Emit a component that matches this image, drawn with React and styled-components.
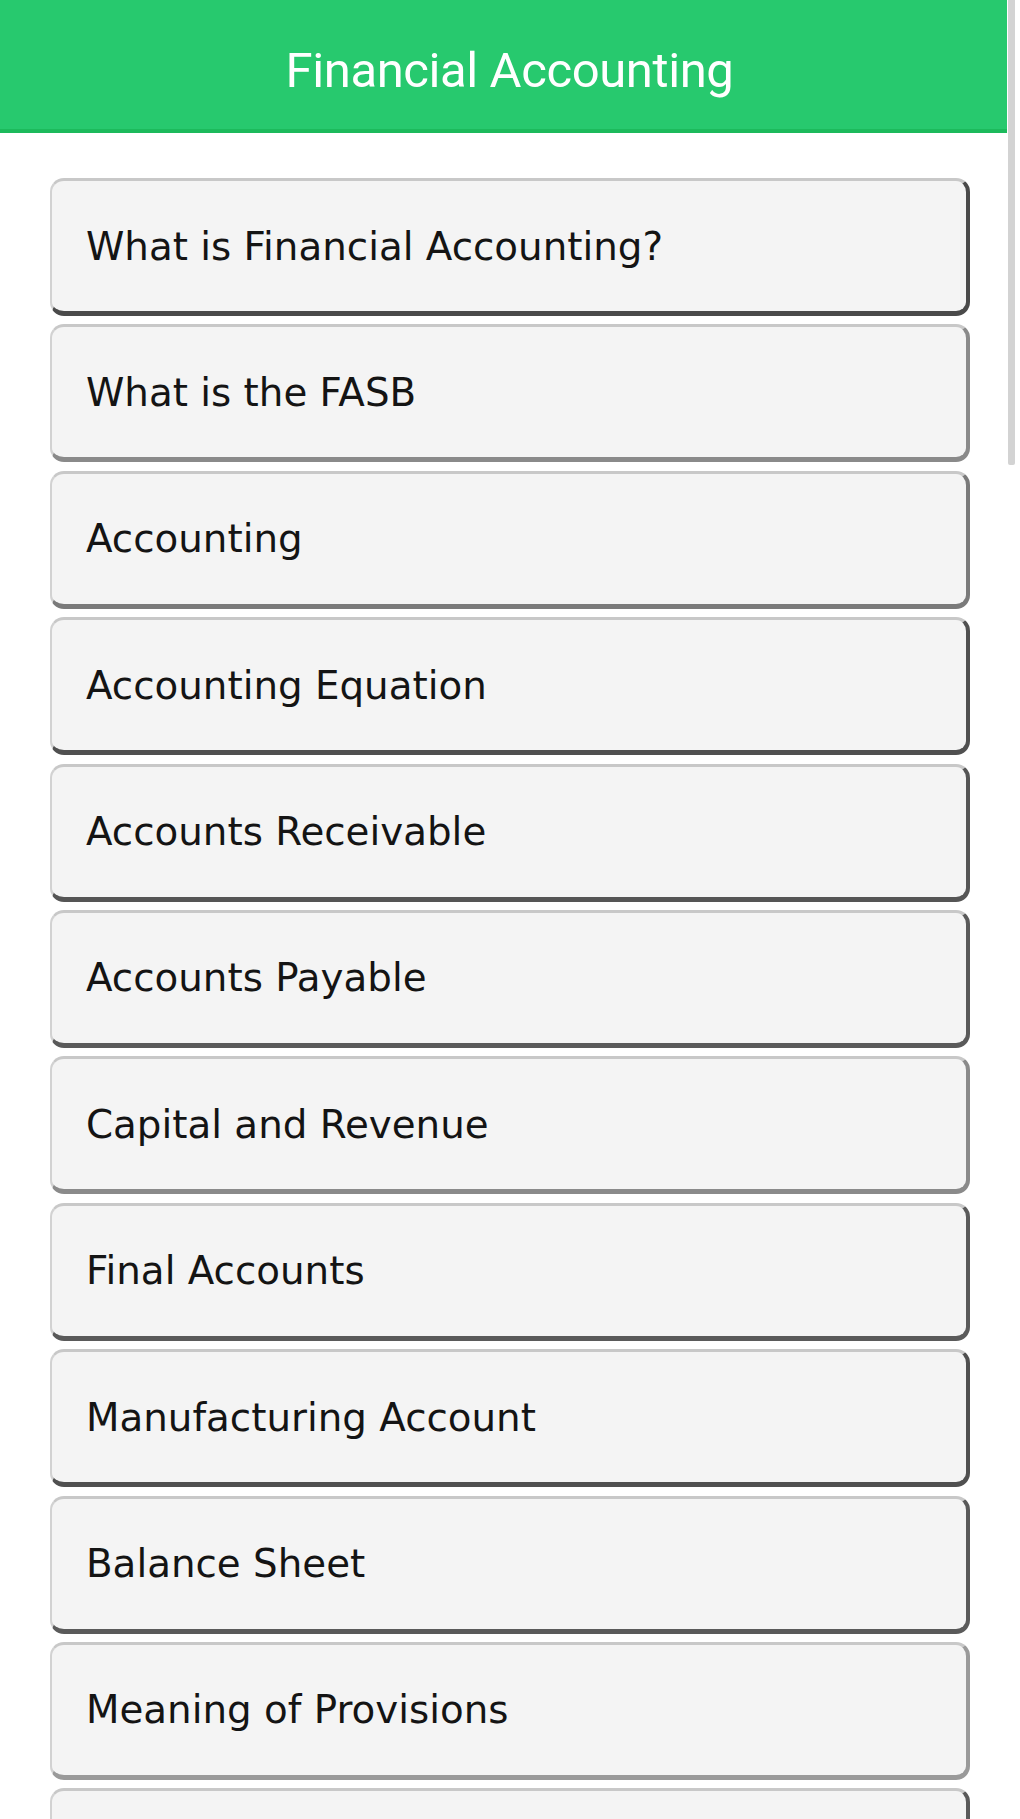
import React from "react";
import styled, { createGlobalStyle } from "styled-components";

const GlobalStyle = createGlobalStyle`
  html, body {
    margin: 0;
    padding: 0;
    background: #ffffff;
  }
  body {
    font-family: "DejaVu Sans", Verdana, sans-serif;
    overflow: hidden;
  }
`;

const Page = styled.div`
  position: relative;
  width: 1020px;
  height: 1819px;
  overflow: hidden;
  background: #ffffff;
`;

const Header = styled.header`
  height: 129px;
  width: 1007px;
  background: #27c96e;
  border-bottom: 4px solid #1cba5c;
  display: flex;
  align-items: center;
  justify-content: center;
  padding-left: 6px;
  box-sizing: content-box;
`;

const Title = styled.h1`
  margin: 0;
  font-family: Roboto, "Noto Sans", sans-serif;
  font-weight: 400;
  font-size: 49px;
  color: #ffffff;
  letter-spacing: -0.4px;
  line-height: 1;
  transform: translateY(6px);
`;

const List = styled.ul`
  list-style: none;
  margin: 0;
  padding: 45px 50px 0 50px;
  display: flex;
  flex-direction: column;
  gap: 8.4px;
`;

const Card = styled.li`
  box-sizing: border-box;
  flex: none;
  height: 138px;
  width: 920px;
  background: #f4f4f4;
  border-radius: 14px;
  border-top: 3px solid #c8c8c8;
  border-left: 2px solid #d2d2d2;
  border-right: 4px solid ${(p) => p.$edge};
  border-bottom: 5px solid ${(p) => p.$edge};
  display: flex;
  align-items: center;
  padding-left: 34px;
  font-size: 38.8px;
  color: #141414;
  white-space: nowrap;
`;

const Rail = styled.div`
  position: absolute;
  top: 0;
  right: 0;
  width: 13px;
  height: 133px;
  background: #ffffff;
`;

const Thumb = styled.div`
  position: absolute;
  top: 0;
  right: 5px;
  width: 7px;
  height: 465px;
  background: #d3d3d3;
  border-radius: 0 0 2px 2px;
`;

const items = [
  ["What is Financial Accounting?", "#4a4a4a"],
  ["What is the FASB", "#8a8a8a"],
  ["Accounting", "#7a7a7a"],
  ["Accounting Equation", "#505050"],
  ["Accounts Receivable", "#555555"],
  ["Accounts Payable", "#5a5a5a"],
  ["Capital and Revenue", "#8a8a8a"],
  ["Final Accounts", "#5a5a5a"],
  ["Manufacturing Account", "#505050"],
  ["Balance Sheet", "#5a5a5a"],
  ["Meaning of Provisions", "#9a9a9a"],
  ["", "#5a5a5a"],
];

export default function App() {
  return (
    <Page>
      <GlobalStyle />
      <Header>
        <Title>Financial Accounting</Title>
      </Header>
      <List>
        {items.map(([label, edge], i) => (
          <Card key={i} $edge={edge}>
            {label}
          </Card>
        ))}
      </List>
      <Rail />
      <Thumb />
    </Page>
  );
}
